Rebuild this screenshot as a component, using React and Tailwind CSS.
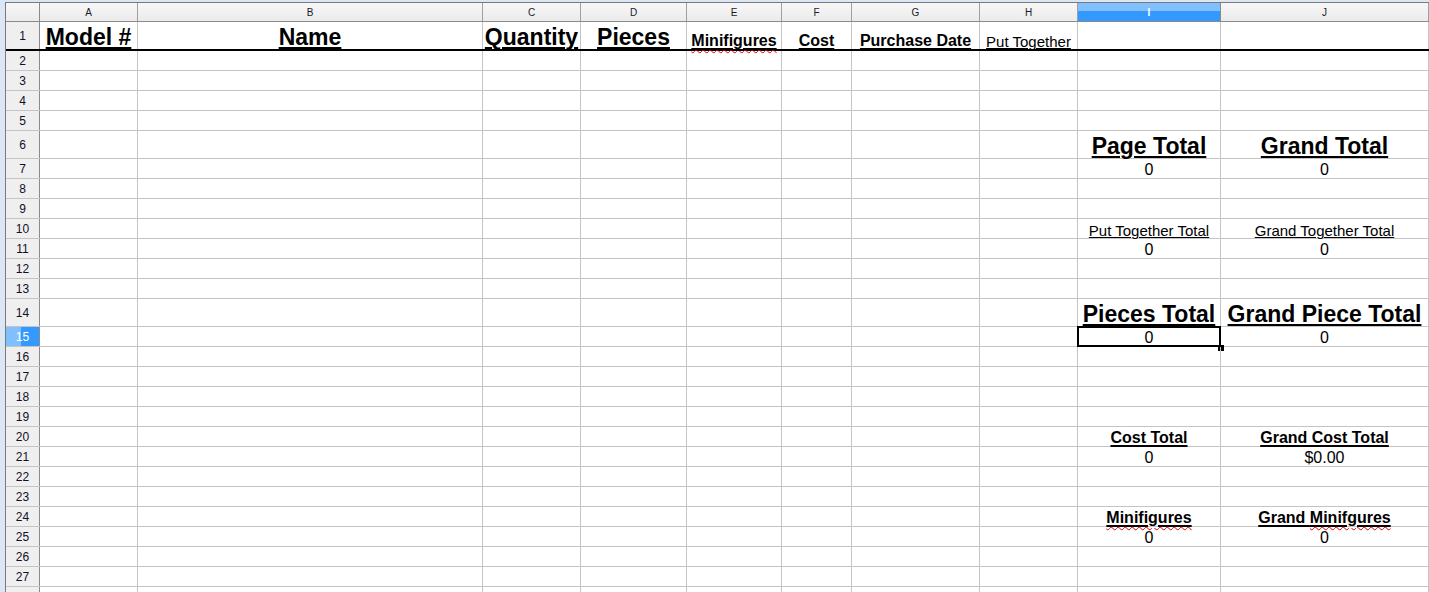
import React from "react";

const columns = [
  { key: "A", w: "w-[98px]" },
  { key: "B", w: "w-[345px]" },
  { key: "C", w: "w-[98px]" },
  { key: "D", w: "w-[106px]" },
  { key: "E", w: "w-[95px]" },
  { key: "F", w: "w-[70px]" },
  { key: "G", w: "w-[128px]" },
  { key: "H", w: "w-[98px]" },
  { key: "I", w: "w-[143px]" },
  { key: "J", w: "w-[208px]" },
];

const rowHeight = (n) => {
  if (n === 1) return "h-[29px] border-b-2 border-b-black";
  if (n === 6 || n === 14) return "h-[28px] border-b border-b-[#c4c4c4]";
  return "h-[20px] border-b border-b-[#c4c4c4]";
};

const Big = ({ children }) => (
  <span className="text-[23px] font-bold underline decoration-2 underline-offset-[2px]">
    {children}
  </span>
);

const Small = ({ children }) => (
  <span className="text-[16px] font-bold underline decoration-[1.5px] underline-offset-[2px]">
    {children}
  </span>
);

const Plain = ({ children }) => (
  <span className="text-[15px] underline decoration-1 underline-offset-[1px]">{children}</span>
);

const Num = ({ children }) => <span className="text-[16px]">{children}</span>;

// spell-check squiggle
const Spell = ({ children }) => (
  <span className="underline decoration-wavy decoration-[#e00000] decoration-1 underline-offset-[3px]">
    {children}
  </span>
);

const cells = {
  "1A": <Big>Model #</Big>,
  "1B": <Big>Name</Big>,
  "1C": <Big>Quantity</Big>,
  "1D": <Big>Pieces</Big>,
  "1E": (
    <Small>
      <Spell>Minifigures</Spell>
    </Small>
  ),
  "1F": <Small>Cost</Small>,
  "1G": <Small>Purchase Date</Small>,
  "1H": <Plain>Put Together</Plain>,
  "6I": <Big>Page Total</Big>,
  "6J": <Big>Grand Total</Big>,
  "7I": <Num>0</Num>,
  "7J": <Num>0</Num>,
  "10I": <Plain>Put Together Total</Plain>,
  "10J": <Plain>Grand Together Total</Plain>,
  "11I": <Num>0</Num>,
  "11J": <Num>0</Num>,
  "14I": <Big>Pieces Total</Big>,
  "14J": <Big>Grand Piece Total</Big>,
  "15I": <Num>0</Num>,
  "15J": <Num>0</Num>,
  "20I": <Small>Cost Total</Small>,
  "20J": <Small>Grand Cost Total</Small>,
  "21I": <Num>0</Num>,
  "21J": <Num>$0.00</Num>,
  "24I": (
    <Small>
      <Spell>Minifigures</Spell>
    </Small>
  ),
  "24J": (
    <Small>
      Grand <Spell>Minifgures</Spell>
    </Small>
  ),
  "25I": <Num>0</Num>,
  "25J": <Num>0</Num>,
};

const rows = Array.from({ length: 28 }, (_, i) => i + 1);

export default function App() {
  return (
    <div
      className="w-[1429px] h-[592px] overflow-hidden bg-[#dce7f5] pl-[5px] pt-[2px] text-black"
      style={{ fontFamily: '"Liberation Sans", Arial, sans-serif' }}
    >
      <div className="h-full border-l border-t border-[#7a7a7a] bg-white">
        {/* Column header */}
        <div className="flex h-[19px] border-b border-b-[#8a8a8a] text-[10px]">
          <div className="w-[34px] shrink-0 bg-gradient-to-b from-[#f7f7f7] to-[#ebebeb] border-r border-r-[#8a8a8a]" />
          {columns.map((c) =>
            c.key === "I" ? (
              <div
                key={c.key}
                className={`${c.w} shrink-0 flex items-center justify-center border-r border-r-[#8a8a8a] bg-[linear-gradient(to_bottom,#80c0ff_0%,#80c0ff_45%,#3399ff_45%,#3399ff_100%)] text-white font-bold`}
              >
                {c.key}
              </div>
            ) : (
              <div
                key={c.key}
                className={`${c.w} shrink-0 flex items-center justify-center border-r border-r-[#a0a0a0] bg-gradient-to-b from-[#f7f7f7] to-[#ebebeb] text-[#1a1a2a]`}
              >
                {c.key}
              </div>
            )
          )}
        </div>

        {/* Rows */}
        {rows.map((n) => (
          <div key={n} className={`flex ${rowHeight(n)}`}>
            <div
              className={`w-[34px] shrink-0 flex items-center justify-center border-r border-r-[#8a8a8a] text-[12px] ${
                n === 15
                  ? "bg-[linear-gradient(to_right,#80c0ff_0%,#80c0ff_45%,#3399ff_45%,#3399ff_100%)] text-white"
                  : "bg-[#efefef] text-[#101028]"
              }`}
            >
              {n < 28 ? n : ""}
            </div>
            {columns.map((c) => {
              const id = `${n}${c.key}`;
              const selected = id === "15I";
              return (
                <div
                  key={c.key}
                  className={`${c.w} shrink-0 relative flex items-end justify-center border-r border-r-[#c4c4c4] leading-none whitespace-nowrap`}
                >
                  {cells[id]}
                  {selected && (
                    <>
                      <div className="absolute -left-[1px] -top-[1px] -right-[1px] -bottom-[1px] border-2 border-black pointer-events-none" />
                      <div className="absolute -right-[4px] -bottom-[5px] w-[6px] h-[6px] bg-black" />
                    </>
                  )}
                </div>
              );
            })}
          </div>
        ))}
      </div>
    </div>
  );
}
